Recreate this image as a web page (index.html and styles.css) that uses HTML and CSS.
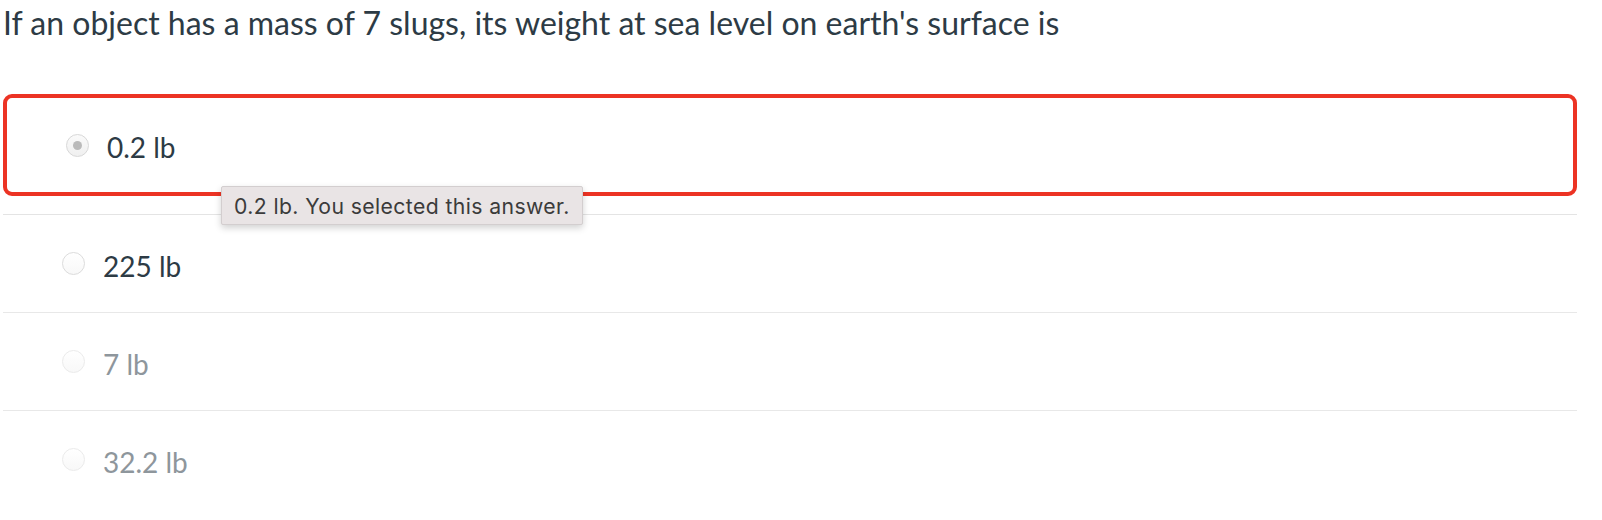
FILE: index.html
```html
<!DOCTYPE html>
<html lang="en">
<head>
<meta charset="utf-8">
<title>Quiz question</title>
<link rel="stylesheet" href="styles.css">
</head>
<body>
<div class="question">
  <h1 class="question-text">If an object has a mass of 7 slugs, its weight at sea level on earth's surface is</h1>
  <div class="answers">
    <div class="answer-selected-wrap">
      <div class="answer answer-selected">
        <span class="radio radio-checked"><span class="radio-dot"></span></span>
        <span class="answer-label">0.2 lb</span>
      </div>
      <div class="tooltip">0.2 lb. You selected this answer.</div>
    </div>
    <div class="answer answer-row">
      <span class="radio"></span>
      <span class="answer-label">225 lb</span>
    </div>
    <div class="answer answer-row answer-muted">
      <span class="radio radio-muted"></span>
      <span class="answer-label">7 lb</span>
    </div>
    <div class="answer answer-row answer-muted answer-last">
      <span class="radio radio-muted"></span>
      <span class="answer-label">32.2 lb</span>
    </div>
  </div>
</div>
</body>
</html>
```

FILE: styles.css
```css
html, body {
  margin: 0;
  padding: 0;
  background: #ffffff;
}

body {
  font-family: "Lato", "Noto Sans", sans-serif;
  color: #2d3b45;
}

.question {
  width: 1574px;
  padding-left: 3px;
}

.question-text {
  margin: 4px 0 0 0;
  font-size: 32px;
  font-weight: 400;
  line-height: 1.2;
  color: #2d3b45;
}

.answers {
  margin-top: 52px;
}

.answer-selected-wrap {
  position: relative;
  padding-bottom: 18px;
  border-bottom: 1px solid #e4e4e4;
}

.answer {
  display: flex;
  align-items: center;
  gap: 18px;
  font-size: 28px;
}

.answer-selected {
  height: 94px;
  border: 4px solid #ec3324;
  border-radius: 9px;
  padding-left: 59px;
}

.answer-row {
  height: 97px;
  padding-left: 59px;
  border-bottom: 1px solid #e8e8e8;
}

.answer-last {
  border-bottom-color: transparent;
}

.answer-muted {
  color: #8e969c;
}

.radio {
  width: 23px;
  height: 23px;
  box-sizing: border-box;
  border-radius: 50%;
  border: 1px solid #dcdcdc;
  background: linear-gradient(#ffffff, #f8f8f8);
  display: flex;
  align-items: center;
  justify-content: center;
  flex: none;
}

.radio-checked {
  border-color: #d8d8d8;
  background: linear-gradient(#fafafa, #f0f0f0);
}

.radio-muted {
  border-color: #ebebeb;
}

.radio-dot {
  width: 9px;
  height: 9px;
  border-radius: 50%;
  background: #bababa;
}

.answer-label {
  line-height: 1;
  margin-top: 4px;
}

.tooltip {
  position: absolute;
  left: 218px;
  top: 92px;
  height: 39px;
  box-sizing: border-box;
  padding: 0 12px;
  display: flex;
  align-items: center;
  background: #e9e4e5;
  border: 1px solid #d3cecf;
  border-radius: 2px;
  box-shadow: 0 3px 7px rgba(0, 0, 0, 0.18);
  font-family: "Inter", "Liberation Sans", sans-serif;
  font-size: 21.2px;
  letter-spacing: 0.4px;
  color: #3b3b3b;
  white-space: nowrap;
}
```
